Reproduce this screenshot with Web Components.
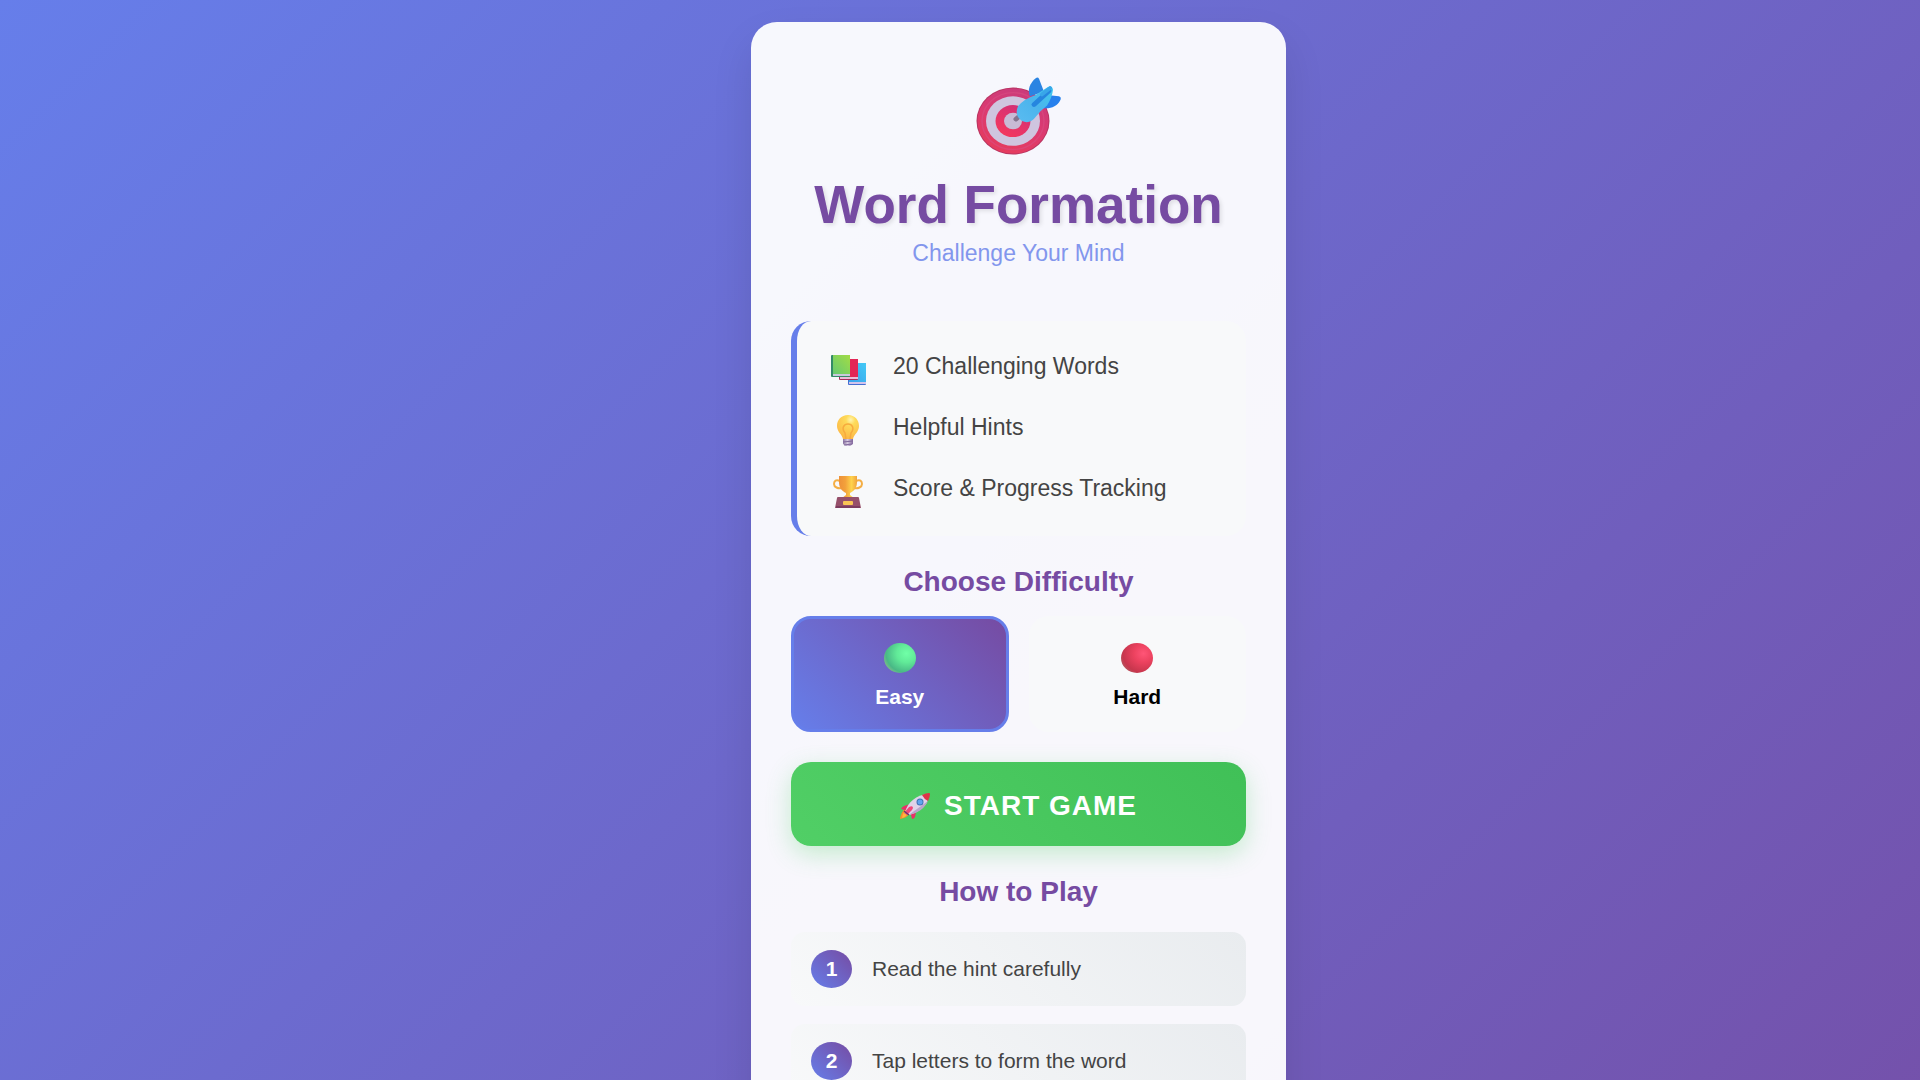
<!DOCTYPE html>
<html lang="en">
<head>
<meta charset="UTF-8">
<meta name="viewport" content="width=device-width, initial-scale=1.0">
<title>Word Formation</title>
<style>
   * {
      box-sizing: border-box;
   }
   :root {
      --blue: #667eea;
      --purple: #764ba2;
      --light: #f8f9fa;
      --ink: #444444;
   }
   body {
      margin: 0;
      min-height: 100vh;
      font-family: "Liberation Sans", Arial, sans-serif;
      background: linear-gradient(135deg, var(--blue) 0%, var(--purple) 115%) fixed;
   }
</style>
</head>
<body>
<game-home>
   <game-header slot="header" name="Word Formation" tagline="Challenge Your Mind"></game-header>

   <feature-list>
      <feature-item icon="books">20 Challenging Words</feature-item>
      <feature-item icon="bulb">Helpful Hints</feature-item>
      <feature-item icon="trophy">Score &amp; Progress Tracking</feature-item>
   </feature-list>

   <game-section heading="Choose Difficulty">
      <difficulty-picker></difficulty-picker>
   </game-section>

   <start-button>START GAME</start-button>

   <game-section class="steps" heading="How to Play">
      <play-step number="1">Read the hint carefully</play-step>
      <play-step number="2">Tap letters to form the word</play-step>
   </game-section>
</game-home>

<script>
const icons = {
   target: `
      <svg viewBox="0 0 86 85" width="86" height="78" preserveAspectRatio="none" aria-hidden="true">
         <defs>
            <linearGradient id="rim" x1="0.7" y1="0" x2="0.3" y2="1">
               <stop offset="0" stop-color="#c93b7c"/>
               <stop offset="0.5" stop-color="#dc3a70"/>
               <stop offset="1" stop-color="#e63c5c"/>
            </linearGradient>
            <linearGradient id="mid" x1="0.8" y1="0" x2="0.2" y2="1">
               <stop offset="0" stop-color="#cf2f79"/>
               <stop offset="1" stop-color="#f6385c"/>
            </linearGradient>
            <linearGradient id="dart" x1="1" y1="0" x2="0" y2="1">
               <stop offset="0" stop-color="#3fc9ee"/>
               <stop offset="0.5" stop-color="#4cb4ec"/>
               <stop offset="1" stop-color="#5abcf1"/>
            </linearGradient>
         </defs>
         <circle cx="37" cy="48" r="36.5" fill="#b83461"/>
         <circle cx="37" cy="48" r="35.5" fill="url(#rim)"/>
         <circle cx="37" cy="48" r="31" fill="none" stroke="#d94d82" stroke-width="1.5" opacity="0.6"/>
         <circle cx="37" cy="48" r="27" fill="#cfc5df"/>
         <circle cx="37" cy="48" r="17.5" fill="url(#mid)"/>
         <circle cx="37" cy="48" r="9" fill="#c8bbd5"/>
         <path d="M40 46L47 39" stroke="#84748e" stroke-width="5" stroke-linecap="round"/>
         <path d="M54 21C51 14 54 6 60 1q2-1 3 1l5 14z" fill="#2b84e2"/>
         <path d="M68 33l5-13 10 1q3 1 1 5c-3 6-9 9-17 8z" fill="#2780ed"/>
         <path d="M42 32Q48 24 59 20L72 11q4-2 5 3-1 9-6 17-6 5-11 12Q54 52 46 48 38 42 42 32z" fill="url(#dart)"/>
         <path d="M58 30L73 15" stroke="#2686df" stroke-width="5" stroke-linecap="round"/>
         <path d="M66 19L74 12" stroke="#38a6e9" stroke-width="4" stroke-linecap="round"/>
      </svg>`,
   books: `
      <svg viewBox="0 0 36 32" width="36" height="32" aria-hidden="true">
         <defs>
            <linearGradient id="green" x1="1" y1="0" x2="0" y2="1">
               <stop offset="0" stop-color="#a2dc45"/>
               <stop offset="1" stop-color="#68ca70"/>
            </linearGradient>
            <linearGradient id="cyan" x1="1" y1="0" x2="0" y2="1">
               <stop offset="0" stop-color="#43c9f5"/>
               <stop offset="1" stop-color="#3aa3ec"/>
            </linearGradient>
         </defs>
         <rect x="17" y="9" width="18" height="22" rx="1" fill="#466fd1"/>
         <path d="M18 9h17v19H18z" fill="url(#cyan)"/>
         <path d="M18 28h17v2H18z" fill="#d3c4ec"/>
         <rect x="8" y="5" width="19" height="21" rx="1" fill="#a82b5d"/>
         <path d="M10 5h17v18H10z" fill="#e32656"/>
         <path d="M9 23h18v2H9z" fill="#e9bed9"/>
         <rect x="0" y="1" width="19" height="22" rx="1" fill="#348b67"/>
         <path d="M2 1h17v19H2z" fill="url(#green)"/>
         <path d="M2 20h17v2H2z" fill="#c8c9dd"/>
      </svg>`,
   bulb: `
      <svg viewBox="0 0 36 32" width="36" height="32" aria-hidden="true">
         <defs>
            <radialGradient id="glass" cx="0.62" cy="0.2" r="0.85">
               <stop offset="0" stop-color="#fff4b0"/>
               <stop offset="0.25" stop-color="#fedb5a"/>
               <stop offset="1" stop-color="#fcb544"/>
            </radialGradient>
            <linearGradient id="cap">
               <stop offset="0" stop-color="#8d78a3"/>
               <stop offset="0.45" stop-color="#d5c8df"/>
               <stop offset="1" stop-color="#8569a0"/>
            </linearGradient>
         </defs>
         <path d="M17 0C10 0 6 5 6 11c0 6 5 8 6 13h10c1-5 6-7 6-13C28 5 24 0 17 0z" fill="url(#glass)"/>
         <path d="M15 24l-1-6c-4-5-1-9 3-9s7 4 3 9l-1 6" fill="none" stroke="#f7ab3e" stroke-width="1.5"/>
         <path d="M12 24h10v5l-3 2h-4l-3-2z" fill="url(#cap)"/>
         <path d="M12 27l10-1M13 30l8-1" stroke="#80699b" stroke-width="1"/>
      </svg>`,
   trophy: `
      <svg viewBox="0 0 36 32" width="36" height="32" aria-hidden="true">
         <defs>
            <linearGradient id="gold">
               <stop offset="0" stop-color="#ed9139"/>
               <stop offset="0.35" stop-color="#f3a13b"/>
               <stop offset="0.7" stop-color="#fed34c"/>
               <stop offset="1" stop-color="#f1a23c"/>
            </linearGradient>
         </defs>
         <path d="M9 5C5 3 3 5 3 8c0 3 4 5 8 4M25 5c4-2 6 0 6 3 0 3-4 5-8 4" fill="none" stroke="#f4ae44" stroke-width="2"/>
         <path d="M8 0h18v6c0 6-3 9-7 11v2l4 3H11l4-3v-2C11 15 8 12 8 6z" fill="url(#gold)"/>
         <path d="M7 21h20q1 0 1 1l2 10H4l2-10q0-1 1-1z" fill="#96506a"/>
         <path d="M5 30h24v2H5z" fill="#7d3c5f"/>
         <rect x="12" y="25" width="10" height="4" rx="1" fill="#fac554"/>
      </svg>`,
   rocket: `
      <svg viewBox="0 0 30 26" width="30" height="26" aria-hidden="true">
         <path d="M5 16Q1 19 0 26q7-1 9-5z" fill="#f98d2d"/>
         <path d="M5 18q-3 3-3 7 4-1 5-4z" fill="#fdb83b"/>
         <path d="M10 11L4 13q-2 1-3 3l8 2zM16 19l-1 5q-1 2-3 2l-2-8z" fill="#ea3167"/>
         <path d="M5 19C8 9 16 2 28 1q1 0 1 1C28 12 20 19 9 22z" fill="#dfd3e9"/>
         <path d="M10 21l18-13c-3 7-10 12-19 14z" fill="#b9a5ca"/>
         <path d="M22 2q4-2 7-2 1 0 1 1 0 3-2 7-4-2-6-6z" fill="#df3348"/>
         <circle cx="20" cy="9" r="3.5" fill="#3f72b4"/>
         <circle cx="20" cy="9" r="2.5" fill="#5fa4ef"/>
         <path d="M4 20l5-6q4-2 4 1l-1 2-5 5z" fill="#f1477b"/>
         <path d="M4 18l5 4" stroke="#643a69" stroke-width="1.5"/>
      </svg>`,
   easy: `
      <svg viewBox="0 0 32 30" width="32" height="30" aria-hidden="true">
         <defs>
            <radialGradient id="green-ball" cx="0.7" cy="0.35" r="0.75">
               <stop offset="0" stop-color="#70ffa7"/>
               <stop offset="0.4" stop-color="#61ea98"/>
               <stop offset="0.85" stop-color="#49b886"/>
               <stop offset="1" stop-color="#79bd88"/>
            </radialGradient>
         </defs>
         <ellipse cx="16" cy="15" rx="16" ry="15" fill="url(#green-ball)"/>
      </svg>`,
   hard: `
      <svg viewBox="0 0 32 30" width="32" height="30" aria-hidden="true">
         <defs>
            <radialGradient id="red-ball" cx="0.7" cy="0.35" r="0.75">
               <stop offset="0" stop-color="#ff5577"/>
               <stop offset="0.4" stop-color="#ec425f"/>
               <stop offset="0.85" stop-color="#c7364d"/>
               <stop offset="1" stop-color="#b8505a"/>
            </radialGradient>
         </defs>
         <ellipse cx="16" cy="15" rx="16" ry="15" fill="url(#red-ball)"/>
      </svg>`
};

const home_template = document.createElement('template');
home_template.innerHTML = `
   <style>
      :host {
         display: flex;
         justify-content: center;
         padding: 22px 0 22px 117px;
      }
      main {
         box-sizing: border-box;
         width: 100%;
         max-width: 535px;
         padding: 55px 40px 40px;
         border-radius: 26px;
         background: rgba(255, 255, 255, 0.95);
         box-shadow: 0 20px 40px rgba(0, 0, 0, 0.1);
      }
   </style>
   <main>
      <slot name="header"></slot>
      <slot></slot>
   </main>
`;

const header_template = document.createElement('template');
header_template.innerHTML = `
   <style>
      :host {
         display: block;
         text-align: center;
         margin-bottom: 54px;
      }
      svg {
         display: block;
         margin: 0 auto 20px;
      }
      h1 {
         margin: 0;
         font-size: 53px;
         line-height: 60px;
         color: var(--purple);
         text-shadow: 2px 2px 4px rgba(0, 0, 0, 0.1);
      }
      p {
         margin: 4px 0 0;
         font-size: 23px;
         line-height: 28px;
         color: var(--blue);
         opacity: 0.8;
      }
   </style>
   <header>
      ${icons.target}
      <h1></h1>
      <p></p>
   </header>
`;

const features_template = document.createElement('template');
features_template.innerHTML = `
   <style>
      :host {
         display: flex;
         flex-direction: column;
         gap: 20px;
         padding: 26px 34px;
         margin-bottom: 30px;
         border-left: 6px solid var(--blue);
         border-radius: 20px;
         background: var(--light);
      }
   </style>
   <slot></slot>
`;

const feature_template = document.createElement('template');
feature_template.innerHTML = `
   <style>
      :host {
         display: flex;
         align-items: center;
         gap: 26px;
         min-height: 41px;
         font-size: 23px;
         line-height: 28px;
         color: var(--ink);
      }
      .icon {
         display: flex;
         padding-top: 4px;
      }
      .label {
         padding-bottom: 4px;
      }
   </style>
   <span class="icon"></span>
   <span class="label"><slot></slot></span>
`;

const section_template = document.createElement('template');
section_template.innerHTML = `
   <style>
      :host {
         display: block;
      }
      h2 {
         margin: 0 0 18px;
         font-size: 28px;
         line-height: 32px;
         text-align: center;
         color: var(--purple);
      }
      :host(.steps) h2 {
         margin-bottom: 24px;
      }
      .content {
         display: flex;
         flex-direction: column;
         gap: 18px;
      }
   </style>
   <h2></h2>
   <div class="content"><slot></slot></div>
`;

const difficulty_template = document.createElement('template');
difficulty_template.innerHTML = `
   <style>
      :host {
         display: grid;
         grid-template-columns: 1fr 1fr;
         gap: 20px;
      }
      button {
         display: flex;
         flex-direction: column;
         align-items: center;
         gap: 10px;
         padding: 24px 16px 18px;
         border: 3px solid transparent;
         border-radius: 20px;
         background: var(--light);
         font: bold 21px/28px "Liberation Sans", Arial, sans-serif;
         color: #000000;
         cursor: pointer;
      }
      button[aria-pressed="true"] {
         border-color: var(--blue);
         background: linear-gradient(45deg, var(--blue), var(--purple));
         color: #ffffff;
      }
   </style>
   <button type="button" aria-pressed="true">${icons.easy}<span>Easy</span></button>
   <button type="button" aria-pressed="false">${icons.hard}<span>Hard</span></button>
`;

const start_template = document.createElement('template');
start_template.innerHTML = `
   <style>
      :host {
         display: block;
         margin: 30px 0;
      }
      button {
         display: flex;
         align-items: center;
         justify-content: center;
         gap: 14px;
         width: 100%;
         padding: 28px 26px 24px;
         border: none;
         border-radius: 20px;
         background: linear-gradient(45deg, #51cf66, #40c057);
         box-shadow: 0 8px 25px rgba(81, 207, 102, 0.3);
         font: bold 28px/32px "Liberation Sans", Arial, sans-serif;
         letter-spacing: 1px;
         color: #ffffff;
         cursor: pointer;
      }
   </style>
   <button type="button">${icons.rocket}<span><slot></slot></span></button>
`;

const step_template = document.createElement('template');
step_template.innerHTML = `
   <style>
      :host {
         display: flex;
         align-items: center;
         gap: 20px;
         padding: 18px 20px;
         border-radius: 14px;
         background: linear-gradient(45deg, #f8f9fa, #e9ecef);
         font-size: 21px;
         line-height: 28px;
         color: var(--ink);
      }
      .number {
         display: flex;
         align-items: center;
         justify-content: center;
         width: 41px;
         height: 38px;
         border-radius: 50%;
         background: linear-gradient(45deg, var(--blue), var(--purple));
         font-weight: bold;
         color: #ffffff;
      }
   </style>
   <span class="number"></span>
   <span><slot></slot></span>
`;

class GameElement extends HTMLElement
{
   constructor(template)
   {
      super();
      this.attachShadow({ mode: 'open' });
      this.shadowRoot.appendChild(template.content.cloneNode(true));
   }
}

class GameHome extends GameElement
{
   constructor()
   {
      super(home_template);
   }
}

class GameHeader extends GameElement
{
   constructor()
   {
      super(header_template);
   }

   connectedCallback()
   {
      this.shadowRoot.querySelector('h1').textContent = this.getAttribute('name');
      this.shadowRoot.querySelector('p').textContent = this.getAttribute('tagline');
   }
}

class FeatureList extends GameElement
{
   constructor()
   {
      super(features_template);
   }
}

class FeatureItem extends GameElement
{
   constructor()
   {
      super(feature_template);
   }

   connectedCallback()
   {
      this.shadowRoot.querySelector('.icon').innerHTML = icons[this.getAttribute('icon')];
   }
}

class GameSection extends GameElement
{
   constructor()
   {
      super(section_template);
   }

   connectedCallback()
   {
      this.shadowRoot.querySelector('h2').textContent = this.getAttribute('heading');
   }
}

class DifficultyPicker extends GameElement
{
   constructor()
   {
      super(difficulty_template);
   }

   connectedCallback()
   {
      const buttons = this.shadowRoot.querySelectorAll('button');
      buttons.forEach(button => {
         button.addEventListener('click', () => {
            buttons.forEach(other => other.setAttribute('aria-pressed', other === button));
         });
      });
   }
}

class StartButton extends GameElement
{
   constructor()
   {
      super(start_template);
   }
}

class PlayStep extends GameElement
{
   constructor()
   {
      super(step_template);
   }

   connectedCallback()
   {
      this.shadowRoot.querySelector('.number').textContent = this.getAttribute('number');
   }
}

customElements.define('game-home', GameHome);
customElements.define('game-header', GameHeader);
customElements.define('feature-list', FeatureList);
customElements.define('feature-item', FeatureItem);
customElements.define('game-section', GameSection);
customElements.define('difficulty-picker', DifficultyPicker);
customElements.define('start-button', StartButton);
customElements.define('play-step', PlayStep);
</script>
</body>
</html>
